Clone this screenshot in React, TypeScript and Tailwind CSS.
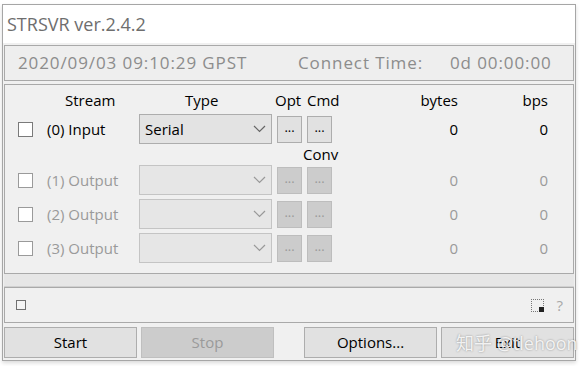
import React from "react";

const font = { fontFamily: '"Open Sans", "Noto Sans", "Noto Sans CJK SC", sans-serif' };

function Check({ disabled }: { disabled?: boolean }) {
    return (
        <div
            className={
                "w-[15px] h-[15px] bg-white border " +
                (disabled ? "border-[#9a9a9a]" : "border-[#7a7a7a]")
            }
        />
    );
}

function Chevron({ color }: { color: string }) {
    return (
        <svg width="13" height="8" viewBox="0 0 13 8" className="mr-[5px]">
            <polyline points="1,1 6.5,6.5 12,1" fill="none" stroke={color} strokeWidth="1.2" />
        </svg>
    );
}

function Combo({ value, disabled }: { value?: string; disabled?: boolean }) {
    return (
        <div
            className={
                "w-[133px] h-[30px] flex items-center justify-between border " +
                (disabled ? "bg-[#e6e6e6] border-[#c4c4c4]" : "bg-[#e3e3e3] border-[#adadad]")
            }
        >
            <span className="pl-[5px] text-[15px] text-black">{value}</span>
            <Chevron color={disabled ? "#999999" : "#666666"} />
        </div>
    );
}

function Dots({ disabled }: { disabled?: boolean }) {
    return (
        <div
            className={
                "w-[25px] h-[27px] flex items-center justify-center border text-[13px] leading-none " +
                (disabled
                    ? "bg-[#cccccc] border-[#bdbdbd] text-[#9a9a9a]"
                    : "bg-[#e1e1e1] border-[#adadad] text-black")
            }
        >
            <span className="-mt-[3px]">...</span>
        </div>
    );
}

function StreamRow({ label, value, disabled }: { label: string; value?: string; disabled?: boolean }) {
    const txt = disabled ? "text-[#9a9a9a]" : "text-black";
    return (
        <div className="flex items-center h-[30px] pl-[13px]">
            <Check disabled={disabled} />
            <span className={"ml-[14px] w-[92px] text-[15px] " + txt}>{label}</span>
            <Combo value={value} disabled={disabled} />
            <div className="ml-[5px]">
                <Dots disabled={disabled} />
            </div>
            <div className="ml-[5px]">
                <Dots disabled={disabled} />
            </div>
            <span className={"w-[126px] text-right text-[15px] " + txt}>0</span>
            <span className={"w-[90px] text-right text-[15px] " + txt}>0</span>
        </div>
    );
}

function Button({ label, disabled }: { label: string; disabled?: boolean }) {
    return (
        <div
            className={
                "w-[133px] h-[31px] flex items-center justify-center border text-[15px] " +
                (disabled
                    ? "bg-[#cccccc] border-[#bfbfbf] text-[#9a9a9a]"
                    : "bg-[#e1e1e1] border-[#adadad] text-black")
            }
        >
            {label}
        </div>
    );
}

export default function App() {
    return (
        <div className="w-[586px] h-[366px] bg-white overflow-hidden relative" style={font}>
            <div className="ml-[2px] mt-[4px] w-[574px] h-[357px] border border-[#a6a6a6] bg-[#f0f0f0] flex flex-col shadow-[0_2px_4px_rgba(0,0,0,0.15)]">
                <div className="h-[38px] bg-white flex items-center pl-[4px] text-[18px] text-[#6e6e6e]">
                    STRSVR ver.2.4.2
                </div>

                <div className="mx-[1px] mt-[2px] h-[36px] border border-[#a9a9a9] bg-[#eeeeee] flex items-center text-[17px] text-[#8c8c8c] tracking-[0.9px]">
                    <span className="ml-[13px] w-[280px]">2020/09/03 09:10:29 GPST</span>
                    <span className="w-[152px]">Connect Time:</span>
                    <span>0d 00:00:00</span>
                </div>

                <div className="mx-[1px] mt-[3px] h-[190px] border border-[#a9a9a9] bg-[#f0f0f0] flex flex-col">
                    <div className="flex items-center h-[22px] mt-[4px] text-[15px] text-black">
                        <span className="ml-[60px] w-[120px]">Stream</span>
                        <span className="w-[90px]">Type</span>
                        <span className="w-[32px]">Opt</span>
                        <span className="w-[29px]">Cmd</span>
                        <span className="w-[122px] text-right">bytes</span>
                        <span className="w-[90px] text-right">bps</span>
                    </div>
                    <div className="mt-[3px]">
                        <StreamRow label="(0) Input" value="Serial" />
                    </div>
                    <div className="h-[21px] flex items-center text-[15px] text-black">
                        <span className="ml-[298px]">Conv</span>
                    </div>
                    <div className="flex flex-col gap-[4px]">
                        <StreamRow label="(1) Output" disabled />
                        <StreamRow label="(2) Output" disabled />
                        <StreamRow label="(3) Output" disabled />
                    </div>
                </div>

                <div className="mx-[1px] h-[13px] bg-[#e6e6e6] border-b border-[#d0d0d0]" />

                <div className="mx-[1px] h-[36px] border border-[#a9a9a9] bg-[#f0f0f0] flex items-center">
                    <div className="ml-[11px] w-[10px] h-[10px] border border-[#707070] bg-[#f4f4f4]" />
                    <div className="flex-1" />
                    <div className="w-[13px] h-[13px] border border-dotted border-[#777777] relative">
                        <div className="absolute right-[-1px] bottom-[-1px] w-[5px] h-[5px] bg-[#222222]" />
                    </div>
                    <span className="ml-[13px] mr-[10px] text-[15px] text-[#a8a8a8]">?</span>
                </div>

                <div className="mx-[1px] mt-[4px] flex items-center">
                    <Button label="Start" />
                    <div className="ml-[4px]">
                        <Button label="Stop" disabled />
                    </div>
                    <div className="ml-[30px]">
                        <Button label="Options..." />
                    </div>
                    <div className="ml-[4px]">
                        <Button label="Exit" />
                    </div>
                </div>
            </div>

            <div className="absolute left-[456px] top-[330px] text-[18px] text-white/85 [text-shadow:0_0_2px_rgba(0,0,0,0.4)]">
                知乎 @tlehoon
            </div>
        </div>
    );
}
